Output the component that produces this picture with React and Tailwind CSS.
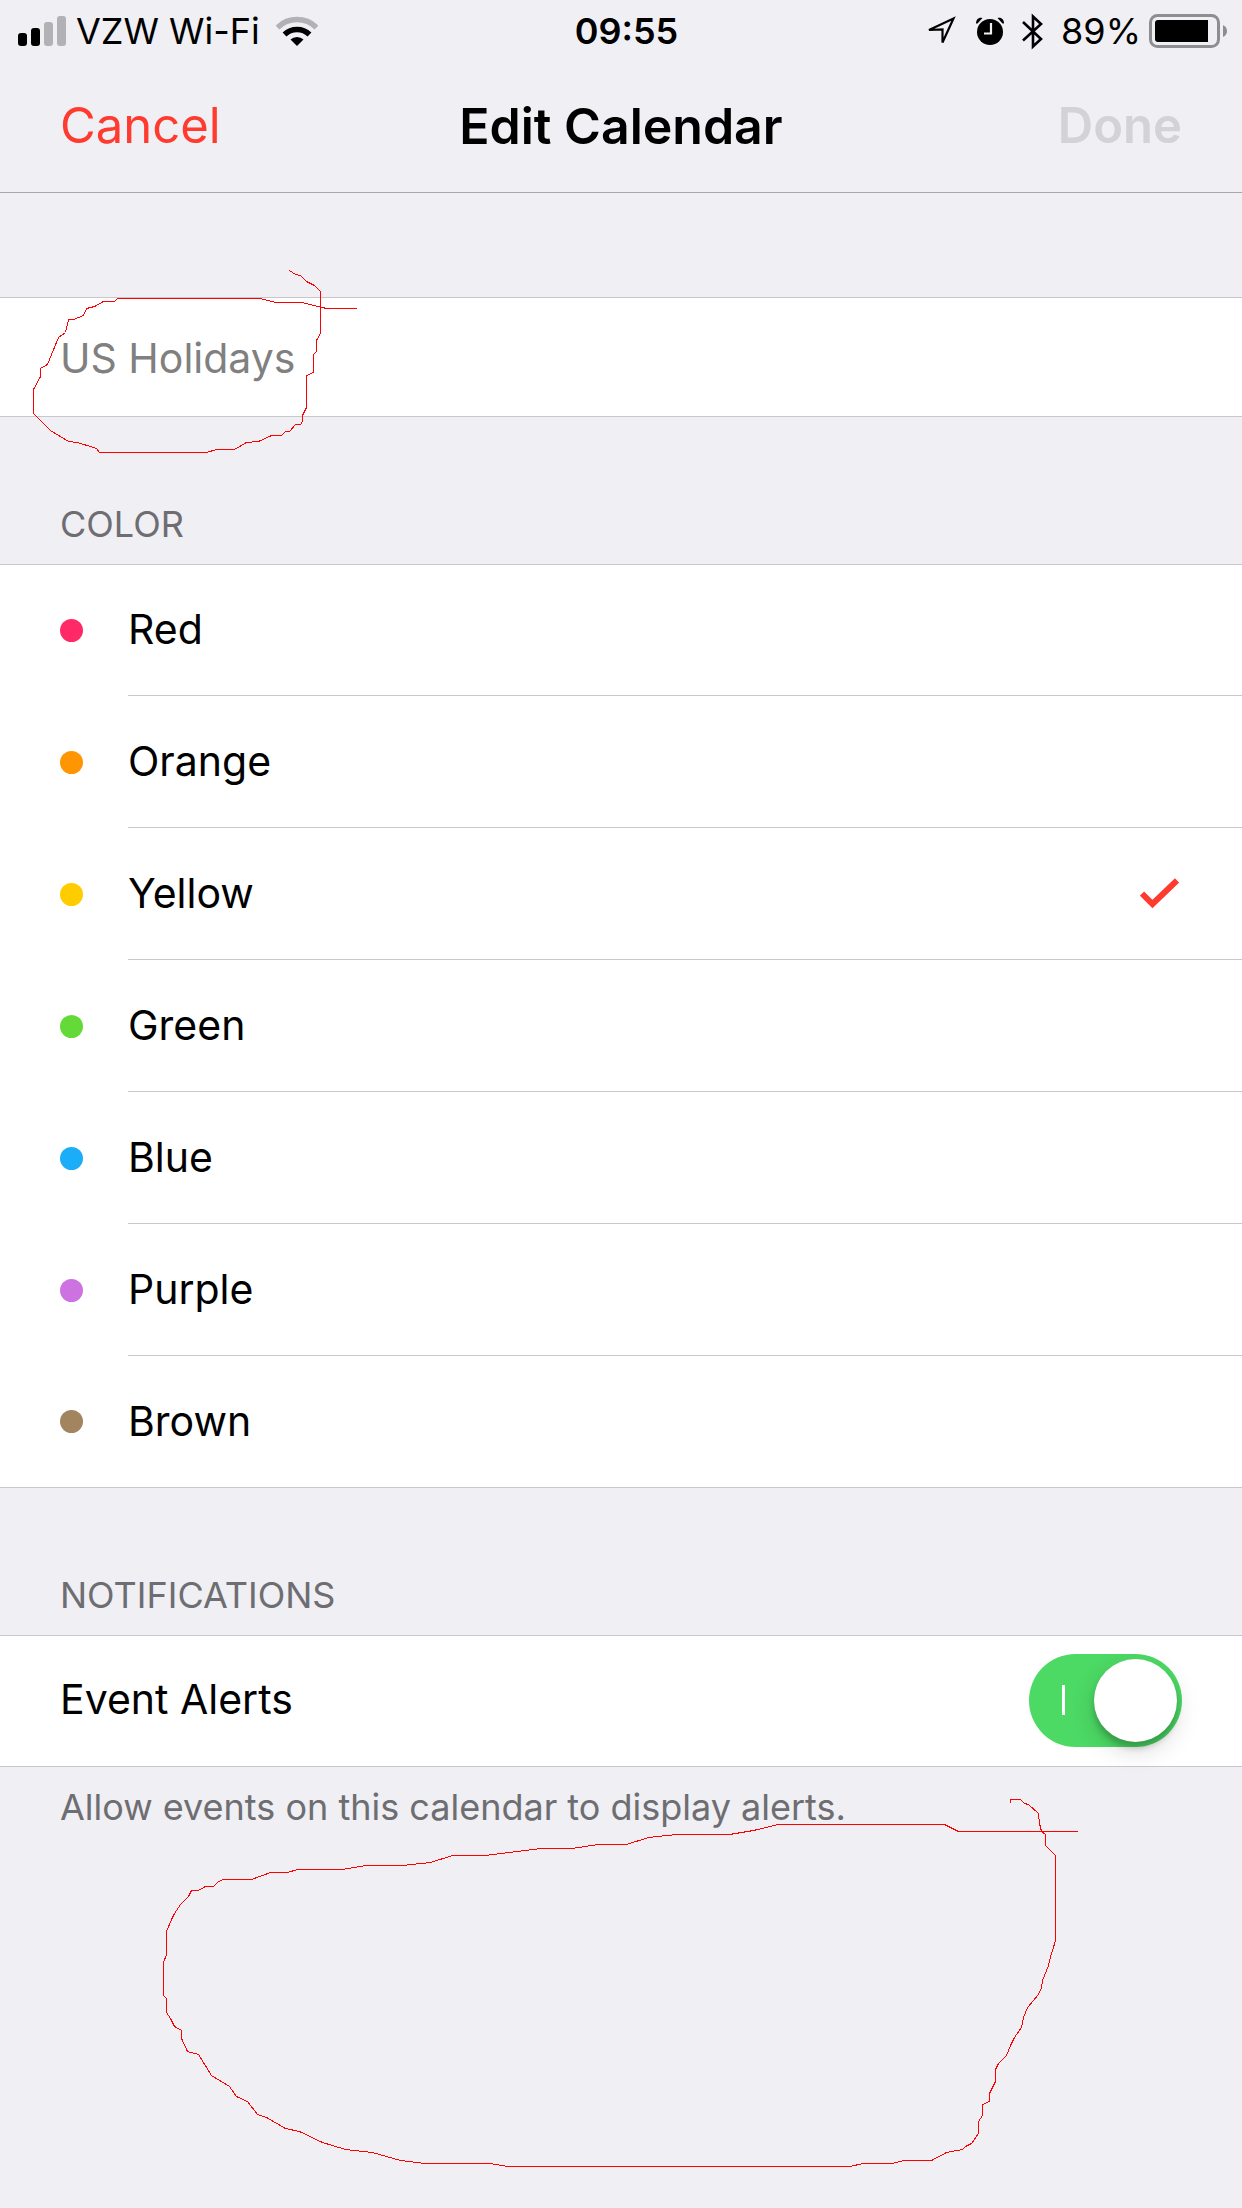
import React, { useState } from 'react';

const colors = [
    { name: 'Red', dot: 'bg-[#ff2968]' },
    { name: 'Orange', dot: 'bg-[#ff9500]' },
    { name: 'Yellow', dot: 'bg-[#ffcc00]' },
    { name: 'Green', dot: 'bg-[#63da38]' },
    { name: 'Blue', dot: 'bg-[#1badf8]' },
    { name: 'Purple', dot: 'bg-[#cc73e1]' },
    { name: 'Brown', dot: 'bg-[#a2845e]' },
];

function StatusBar() {
    return (
        <div className="grid grid-cols-3 items-center h-16 pb-0.5 pl-[18px] pr-[15px] text-[36px] leading-10">
            <div className="flex items-center">
                <svg width="48" height="30" viewBox="0 0 48 30" className="mr-2.5" aria-hidden="true">
                    <rect x="0" y="17" width="9" height="13" rx="3" />
                    <rect x="13" y="12" width="9" height="18" rx="3" />
                    <rect x="26" y="6" width="9" height="24" rx="3" fill="#b2b2b5" />
                    <rect x="39" y="0" width="9" height="30" rx="3" fill="#b2b2b5" />
                </svg>
                <span className="whitespace-nowrap">VZW Wi-Fi</span>
                <svg width="42" height="30" viewBox="0 0 42 30" className="ml-4" aria-hidden="true">
                    <path d="M1.500 11.500A28 28 0 0 1 40.500 11.500" fill="none" stroke="#b2b2b5" strokeWidth="5.500" />
                    <path d="M8.500 18.500A18 18 0 0 1 33.500 18.500" fill="none" stroke="#000" strokeWidth="5.500" />
                    <path d="M14.500 23.500A9.500 9.500 0 0 1 27.500 23.500L21 30Z" />
                </svg>
            </div>
            <time className="pl-2 text-center font-semibold">09:55</time>
            <div className="flex items-center justify-end">
                <svg width="31" height="31" viewBox="0 0 31 31" className="mr-[19px] shrink-0" aria-hidden="true">
                    <path d="M3 14L27.500 2.500L16.500 26.500L16.500 13.500Z" fill="none" stroke="#000" strokeWidth="2.200" />
                </svg>
                <svg width="28" height="29" viewBox="0 0 28 29" className="mr-[18px] shrink-0" aria-hidden="true">
                    <circle cx="14" cy="15" r="13" />
                    <path d="M0 6.500C0 2.500 2.500 0 6.500 1L1.500 6.500Z" />
                    <path d="M28 6.500C28 2.500 25.500 0 21.500 1L26.500 6.500Z" />
                    <path d="M15 6V16.500H8" fill="none" stroke="#efeff4" strokeWidth="2.200" />
                </svg>
                <svg width="21" height="37" viewBox="0 0 21 37" className="mr-[18px] shrink-0" aria-hidden="true">
                    <path d="M1 9L19 26L11 33.500V3.500L19 11L1 27.500" fill="none" stroke="#000" strokeWidth="2.600" />
                </svg>
                <span>89%</span>
                <svg width="78" height="34" viewBox="0 0 78 34" className="ml-2 shrink-0" aria-hidden="true">
                    <rect x="1.500" y="1.500" width="68" height="31" rx="7" fill="none" stroke="#8e8e90" strokeWidth="3" />
                    <path d="M9 6H59V28H9Q6 28 6 25V9Q6 6 9 6Z" />
                    <path d="M74 11Q78 13 78 17T74 23Z" fill="#8e8e90" />
                </svg>
            </div>
        </div>
    );
}

function SectionLabel({ id, children }) {
    return (
        <h2 id={id} className="px-[60px] pt-[88px] pb-5 text-[36px] leading-[39px] text-[#6d6d72]">
            {children}
        </h2>
    );
}

// Hand-drawn pen marks that float above the page
function PenMarks() {
    return (
        <svg
            width="1242"
            height="2208"
            viewBox="0 0 1242 2208"
            className="absolute top-0 left-0 pointer-events-none"
            fill="none"
            stroke="#ff0000"
            strokeWidth="1"
            shapeRendering="crispEdges"
            aria-hidden="true"
        >
            <g transform="translate(0.5 0.5)">
                <polyline points="289,270 295,274 300,275 306,281 314,285 320,291 320,333 316,340 316,351 313,354 313,372 306,375 306,407 302,415 302,421 300,424 295,424 289,431 285,431 281,435 271,435 258,441 246,442 234,449 216,449 206,452 99,452 96,448 77,442 68,441 50,430 33,413 33,389 40,376 40,368 47,364 58,337 65,332 68,319 73,319 83,315 86,308 94,306 103,301 114,301 117,298 259,298 276,302 301,302 326,308 356,308" />
                <polyline points="1010,1802 1010,1799 1020,1799 1024,1803 1028,1804 1038,1813 1039,1823 1041,1831 1045,1834 1045,1845 1055,1855 1055,1940 1049,1960 1048,1965 1042,1980 1041,1987 1038,1994 1027,2007 1023,2017 1021,2027 1014,2037 1010,2045 1006,2055 998,2063 995,2069 995,2081 989,2093 989,2101 982,2104 982,2115 978,2121 978,2133 971,2143 965,2146 962,2149 946,2152 931,2160 903,2160 892,2163 863,2163 849,2166 508,2166 489,2163 425,2163 400,2160 372,2152 345,2149 322,2142 299,2131 285,2128 266,2117 257,2114 247,2101 236,2096 229,2086 211,2075 198,2054 187,2051 181,2038 181,2030 174,2026 170,2018 166,2012 166,1998 163,1995 163,1962 166,1954 166,1931 171,1919 174,1913 180,1904 188,1896 191,1890 198,1890 205,1886 213,1886 217,1882 222,1879 251,1879 270,1872 287,1872 297,1869 341,1869 366,1865 402,1865 430,1862 452,1855 485,1855 540,1848 571,1848 598,1844 626,1844 648,1837 676,1834 729,1834 753,1830 778,1824 944,1824 958,1831 1077,1831" />
            </g>
        </svg>
    );
}

function App() {
    const [title, setTitle] = useState('US Holidays');
    const [selected, setSelected] = useState('Yellow');
    const [alerts, setAlerts] = useState(true);

    return (
        <div className="relative min-h-screen overflow-hidden bg-[#efeff4] font-['Inter',sans-serif] text-black">
            <header className="border-b border-[#a7a7aa]">
                <StatusBar />
                <nav className="grid grid-cols-[1fr_auto_1fr] items-center h-32 px-[60px] pb-1 text-[50px] leading-[60px]">
                    <button type="button" className="justify-self-start text-[49px] text-[#ff3b30]">Cancel</button>
                    <h1 className="font-semibold">Edit Calendar</h1>
                    <button type="button" disabled className="justify-self-end text-[49px] font-semibold text-[#d3d3d6]">Done</button>
                </nav>
            </header>

            <main>
                <input
                    type="text"
                    aria-label="Calendar name"
                    value={title}
                    onChange={(e) => setTitle(e.target.value)}
                    className="block w-full mt-[104px] h-[120px] px-[60px] pt-0.5 bg-white border-y border-[#c8c7cc] text-[41px] text-[#808080] outline-none"
                />

                <SectionLabel id="color-label">COLOR</SectionLabel>
                <div role="radiogroup" aria-labelledby="color-label" className="bg-white border-y border-[#c8c7cc]">
                    {colors.map((color) => (
                        <label key={color.name} className="group flex items-center pl-[60px]">
                            <input
                                type="radio"
                                name="color"
                                value={color.name}
                                checked={selected === color.name}
                                onChange={() => setSelected(color.name)}
                                className="sr-only"
                            />
                            <span className={`w-[23px] h-[23px] mr-[45px] rounded-full ${color.dot}`} />
                            <span className="flex flex-1 items-center justify-between h-[132px] pr-[63px] border-b border-[#c8c7cc] text-[41px] group-first:h-[131px] group-last:h-[131px] group-last:border-b-0">
                                {color.name}
                                {selected === color.name && (
                                    <svg width="39" height="31" viewBox="0 0 39 31" aria-hidden="true">
                                        <path d="M2 15.500L12.500 26L37 2.500" fill="none" stroke="#ff3b30" strokeWidth="6" />
                                    </svg>
                                )}
                            </span>
                        </label>
                    ))}
                </div>

                <SectionLabel id="notifications-label">NOTIFICATIONS</SectionLabel>
                <label className="flex items-center justify-between h-[132px] px-[60px] pb-0.5 bg-white border-y border-[#c8c7cc] text-[41px]">
                    Event Alerts
                    <input
                        type="checkbox"
                        role="switch"
                        checked={alerts}
                        onChange={(e) => setAlerts(e.target.checked)}
                        className="peer sr-only"
                    />
                    <span className="flex items-center justify-between w-[153px] h-[93px] pl-[33px] pr-[5px] rounded-full bg-gray-300 peer-checked:bg-[#4cd964]">
                        <span className="w-[3px] h-[30px] bg-white" />
                        <span className="w-[83px] h-[83px] rounded-full bg-white shadow-[0_9px_24px_rgba(0,0,0,0.15),0_6px_6px_rgba(0,0,0,0.2)]" />
                    </span>
                </label>
                <p className="px-[60px] pt-5 text-[36px] leading-10 text-[#6d6d72]">
                    Allow events on this calendar to display alerts.
                </p>
            </main>

            <PenMarks />
        </div>
    );
}

export default App;
